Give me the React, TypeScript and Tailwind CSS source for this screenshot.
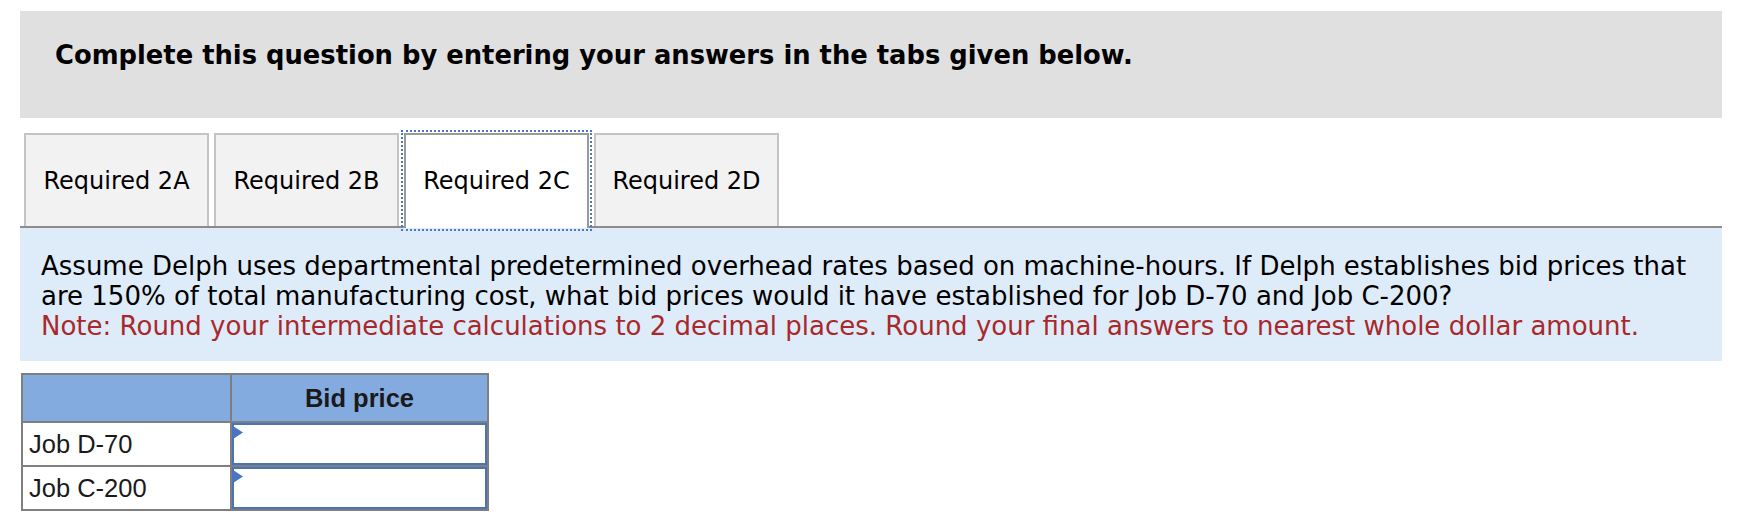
import React from 'react';

const tabs = ['Required 2A', 'Required 2B', 'Required 2C', 'Required 2D'];
const activeTab = 2;

const rows = ['Job D-70', 'Job C-200'];

function AnswerCell() {
  return (
    <div className="relative h-full w-full border-2 border-[#4a74b8] bg-white">
      <svg className="absolute left-[-1px] top-[1px]" width="10" height="13" viewBox="0 0 10 13">
        <polygon points="0,0 10,6.5 0,13" fill="#4a74c4" />
      </svg>
    </div>
  );
}

export default function App() {
  return (
    <div className="w-[1754px] h-[520px] bg-white pt-[11px] pl-[20px] text-black">
      <div className="w-[1702px]">
        {/* Instructions */}
        <div className="h-[107px] bg-[#e0e0e0] pl-[35px] pt-[29px] font-['DejaVu_Sans',Verdana,sans-serif]">
          <h2 className="text-[25.8px] leading-[30px] font-bold">
            Complete this question by entering your answers in the tabs given below.
          </h2>
        </div>

        {/* Tabs */}
        <div className="mt-[15px] flex items-start gap-[5px] pl-[4px] border-b-2 border-[#8c8c8c] font-['DejaVu_Sans',Verdana,sans-serif]">
          {tabs.map((t, i) =>
            i === activeTab ? (
              <div
                key={t}
                className="relative z-10 -mb-[2px] flex h-[95px] w-[185px] items-center justify-center border-2 border-b-0 border-[#9a9a9a] bg-white pb-[2px] text-[24px] outline-2 outline-dotted outline-offset-[1px] outline-[#4a78c8]"
              >
                {t}
              </div>
            ) : (
              <div
                key={t}
                className="flex h-[93px] w-[185px] items-center justify-center border-2 border-b-0 border-[#c4c4c4] bg-[#f2f2f2] text-[24px]"
              >
                {t}
              </div>
            )
          )}
        </div>

        {/* Question */}
        <div className="bg-[#deebf8] pl-[21px] pt-[23px] pb-[20px] text-[26px] leading-[30px] font-['DejaVu_Sans',Verdana,sans-serif]">
          <p className="whitespace-nowrap">
            Assume Delph uses departmental predetermined overhead rates based on machine-hours. If Delph establishes bid prices that
          </p>
          <p className="whitespace-nowrap">
            are 150% of total manufacturing cost, what bid prices would it have established for Job D-70 and Job C-200?
          </p>
          <p className="whitespace-nowrap text-[#a8282b]">
            Note: Round your intermediate calculations to 2 decimal places. Round your final answers to nearest whole dollar amount.
          </p>
        </div>

        {/* Answer table */}
        <div className="ml-[1px] mt-[12px] w-[468px] border-2 border-[#7f7f7f] font-['Liberation_Sans',Arial,sans-serif] text-[25.5px]">
          <div className="grid grid-cols-[207px_2px_255px] h-[46px] bg-[#84abe0]">
            <div />
            <div className="bg-[#7f7f7f]" />
            <div className="flex items-center justify-center font-bold text-[#1a1a1a]">Bid price</div>
          </div>
          {rows.map((r) => (
            <div key={r} className="border-t-2 border-[#7f7f7f] grid grid-cols-[207px_2px_255px] h-[44px]">
              <div className="flex items-center pl-[6px] text-[#1a1a1a]">{r}</div>
              <div className="bg-[#7f7f7f]" />
              <AnswerCell />
            </div>
          ))}
        </div>
      </div>
    </div>
  );
}
